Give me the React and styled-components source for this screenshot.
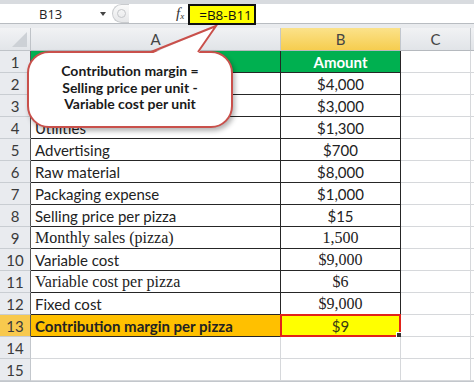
import React from "react";
import styled, { createGlobalStyle, css } from "styled-components";

const Global = createGlobalStyle`
  html, body { margin: 0; padding: 0; background: #fff; overflow: hidden; }
  * { box-sizing: border-box; }
`;

const Page = styled.div`
  position: relative;
  width: 474px;
  height: 382px;
  overflow: hidden;
  font-family: Lato, "Liberation Sans", sans-serif;
  color: #222;
`;

const Toolbar = styled.div`
  height: 24px;
  border-top: 4px solid #d8dbdf;
  border-bottom: 1px solid #b8bcc1;
  background: #fff;
  display: flex;
  align-items: flex-start;
`;

const Gap = styled.div`
  height: 4px;
  background: #e9ebee;
`;

const NameBox = styled.div`
  width: 112px;
  height: 19px;
  display: flex;
  align-items: center;
  padding-left: 39px;
  font-size: 13px;
  font-family: "Open Sans", sans-serif;
  color: #222;
`;

const Arrow = styled.span`
  margin-left: auto;
  margin-right: 6px;
  border-left: 3px solid transparent;
  border-right: 3px solid transparent;
  border-top: 4px solid #444;
`;

const RoundButton = styled.div`
  width: 17px;
  height: 19px;
  border: 1px solid #c9cbce;
  border-right: none;
  border-radius: 10px 0 0 10px;
  background: linear-gradient(#fafafa, #e6e7e9);
  display: flex;
  align-items: center;
  justify-content: center;

  &::after {
    content: "";
    width: 7px;
    height: 7px;
    border-radius: 50%;
    border: 1px solid #c4c6c9;
  }
`;

const Fx = styled.div`
  margin-left: 47px;
  height: 19px;
  display: flex;
  align-items: center;
  font-family: "Liberation Serif", serif;
  font-style: italic;
  font-size: 15px;
  color: #333;

  small {
    font-size: 9px;
    margin-top: 4px;
  }
`;

const FormulaBox = styled.div`
  position: relative;
  z-index: 2;
  margin-left: 4px;
  width: 68px;
  height: 21px;
  background: #ffff00;
  border: 2px solid #111;
  display: flex;
  align-items: center;
  padding-left: 9px;
  font-size: 13.5px;
  font-family: "Open Sans", sans-serif;
  color: #111;
`;

const Sheet = styled.div`
  display: grid;
  grid-template-columns: 31px 250px 120px 70px 1fr;
  grid-template-rows: 23px;
  grid-auto-rows: 22px;
  border-bottom: 1px solid #c3c7cc;
`;

const Corner = styled.div`
  border-right: 1px solid #bfc3c8;
  border-bottom: 1px solid #bfc3c8;
  background: linear-gradient(#f2f3f5, #e2e5e9);
  position: relative;

  &::after {
    content: "";
    position: absolute;
    right: 3px;
    bottom: 3px;
    border-left: 15px solid transparent;
    border-bottom: 15px solid #cdd1d6;
  }
`;

const ColHead = styled.div`
  border-right: 1px solid #c3c7cc;
  border-bottom: 1px solid #b5b9be;
  background: ${(p) =>
    p.$active
      ? "linear-gradient(#fbe28a, #f6cd4f)"
      : "linear-gradient(#f1f2f4, #e1e4e8)"};
  display: flex;
  align-items: center;
  justify-content: center;
  font-size: 15px;
  color: #444;
`;

const RowHead = styled.div`
  border-right: 1px solid ${(p) => (p.$edge ? "#555" : "#c3c7cc")};
  border-bottom: 1px solid #c9cdd2;
  background: ${(p) => (p.$active ? "#f8c94e" : "#e9ebef")};
  display: flex;
  align-items: center;
  justify-content: center;
  font-size: 15px;
  color: #3a3a3a;
`;

const Cell = styled.div`
  position: relative;
  border-right: 1px solid ${(p) => (p.$dark ? "#262626" : "#d6d8db")};
  border-bottom: 1px solid ${(p) => (p.$dark ? "#262626" : "#d6d8db")};
  background: ${(p) => p.$fill || "#fff"};
  display: flex;
  align-items: center;
  justify-content: ${(p) => (p.$center ? "center" : "flex-start")};
  padding: 1px 4px 0;
  font-size: 15px;
  white-space: nowrap;
  color: ${(p) => p.$color || "#222"};
  font-weight: ${(p) => (p.$bold ? 700 : 400)};
  ${(p) =>
    p.$serif &&
    css`
      font-family: "Liberation Serif", serif;
      font-size: 16px;
    `}
  ${(p) =>
    p.$selected &&
    css`
      border: 2px solid #e2231a;
      margin: -1px 0 0 -1px;

      &::after {
        content: "";
        position: absolute;
        right: -4px;
        bottom: -4px;
        width: 5px;
        height: 5px;
        background: #333;
        border: 1px solid #fff;
      }
    `}
`;

const Callout = styled.div`
  position: absolute;
  left: 27px;
  top: 51px;
  width: 206px;
  height: 77px;
  border: 2px solid #c9504b;
  border-radius: 22px;
  background: #fff;
  box-shadow: 2px 3px 5px rgba(0, 0, 0, 0.3);
  display: flex;
  flex-direction: column;
  align-items: center;
  justify-content: center;
  padding-bottom: 3px;
  font-weight: 700;
  font-size: 14px;
  line-height: 16.5px;
  color: #1a1a1a;
  text-align: center;
`;

const Tail = styled.svg`
  position: absolute;
  left: 0;
  top: 0;
  pointer-events: none;
`;

// A1:A3 sit under the callout, so they are left blank
const rows = [
  { a: "", b: "Amount", head: true },
  { a: "", b: "$4,000" },
  { a: "", b: "$3,000" },
  { a: "Utilities", b: "$1,300" },
  { a: "Advertising", b: "$700" },
  { a: "Raw material", b: "$8,000" },
  { a: "Packaging expense", b: "$1,000" },
  { a: "Selling price per pizza", b: "$15" },
  { a: "Monthly sales (pizza)", b: "1,500", serifA: true, serifB: true },
  { a: "Variable cost", b: "$9,000", serifB: true },
  { a: "Variable cost per pizza", b: "$6", serifA: true, serifB: true },
  { a: "Fixed cost", b: "$9,000", serifB: true },
  { a: "Contribution margin per pizza", b: "$9", total: true },
  {},
  {},
];

const App = () => (
  <Page>
    <Global />
    <Toolbar>
      <NameBox>
        B13
        <Arrow />
      </NameBox>
      <RoundButton />
      <Fx>
        f<small>x</small>
      </Fx>
      <FormulaBox>=B8-B11</FormulaBox>
    </Toolbar>
    <Gap />
    <Sheet>
      <Corner />
      <ColHead>A</ColHead>
      <ColHead $active>B</ColHead>
      <ColHead>C</ColHead>
      <ColHead />
      {rows.map((r, i) => {
        const inTable = i < 13;
        return (
          <React.Fragment key={i}>
            <RowHead $active={r.total} $edge={inTable}>
              {i + 1}
            </RowHead>
            <Cell
              $dark={inTable}
              $fill={r.head ? "#00b050" : r.total ? "#ffc000" : undefined}
              $color={r.head ? "#fff" : undefined}
              $center={r.head}
              $bold={r.head || r.total}
              $serif={r.serifA}
            >
              {r.a}
            </Cell>
            <Cell
              $dark={inTable}
              $center
              $fill={r.head ? "#00b050" : r.total ? "#ffff00" : undefined}
              $color={r.head ? "#fff" : r.total ? "#3b3b12" : undefined}
              $bold={r.head}
              $serif={r.serifB}
              $selected={r.total}
            >
              {r.b}
            </Cell>
            <Cell />
            <Cell />
          </React.Fragment>
        );
      })}
    </Sheet>
    <Callout>
      <span>Contribution margin =</span>
      <span>Selling price per unit -</span>
      <span>Variable cost per unit</span>
    </Callout>
    <Tail width="474" height="60" viewBox="0 0 474 60">
      <polygon points="151,54 216,26 198,54" fill="#fff" />
      <path
        d="M151 52 L216 26 L198 52"
        fill="none"
        stroke="#c9504b"
        strokeWidth="2"
        strokeLinejoin="miter"
      />
    </Tail>
  </Page>
);

export default App;
